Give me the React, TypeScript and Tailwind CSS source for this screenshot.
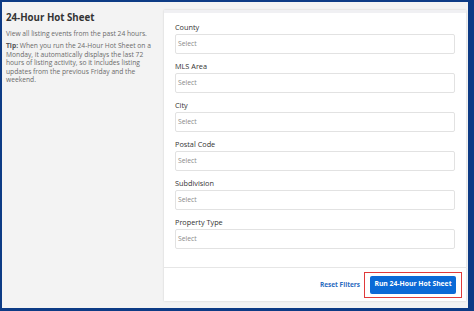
import React from "react";

const fields = ["County", "MLS Area", "City", "Postal Code", "Subdivision", "Property Type"];

export default function App() {
  return (
    <div
      className="w-[474px] h-[311px] bg-[#0d3b85] pt-[2px] pl-[2px] pr-[6px] pb-[3px]"
      style={{ fontFamily: '"Open Sans", "Noto Sans", sans-serif' }}
    >
      <div className="flex h-full bg-[#f3f3f3]">
        <div className="w-[162px] shrink-0 pl-[4px] pr-[8px] pt-[9px]">
          <h1 className="text-[9.7px] leading-[14px] font-bold text-[#333]">24-Hour Hot Sheet</h1>
          <p className="mt-[4px] text-[6.7px] leading-[9px] text-[#6b6b6b]">
            View all listing events from the past 24 hours.
          </p>
          <p className="mt-[4px] text-[6.7px] leading-[8.6px] text-[#6b6b6b]">
            <span className="font-bold text-[#555]">Tip:</span> When you run the 24-Hour Hot Sheet on a Monday, it
            automatically displays the last 72 hours of listing activity, so it includes listing updates from the
            previous Friday and the weekend.
          </p>
        </div>
        <div className="flex-1 pt-[8px] pr-[2px] pb-[7px]">
          <div className="h-full flex flex-col bg-white border-t-[3px] border-[#f0f0f3] shadow-[0_0_2px_rgba(0,0,0,0.15)]">
            <div className="flex-1 px-[11px] pt-[7px]">
              {fields.map((f) => (
                <div key={f} className="mb-[5px]">
                  <div className="h-[14px] flex items-center text-[7.3px] text-[#333]">{f}</div>
                  <div className="h-[20px] flex items-center border border-[#e2e2e2] rounded-[2px] px-[2px] text-[6.8px] text-[#8a8a8a]">
                    Select
                  </div>
                </div>
              ))}
            </div>
            <div className="h-[34px] border-t border-[#e6e6e6] flex items-center justify-end pr-[4px]">
              <span className="text-[6.5px] font-bold text-[#2b6cc0] mr-[4px]">Reset Filters</span>
              <div className="border border-[#e03a3a] px-[5px] py-[3px]">
                <div className="h-[18px] w-[86px] bg-[#0b6ad6] rounded-[2px] flex items-center justify-center text-[6.8px] font-bold text-white">
                  Run 24-Hour Hot Sheet
                </div>
              </div>
            </div>
          </div>
        </div>
      </div>
    </div>
  );
}
